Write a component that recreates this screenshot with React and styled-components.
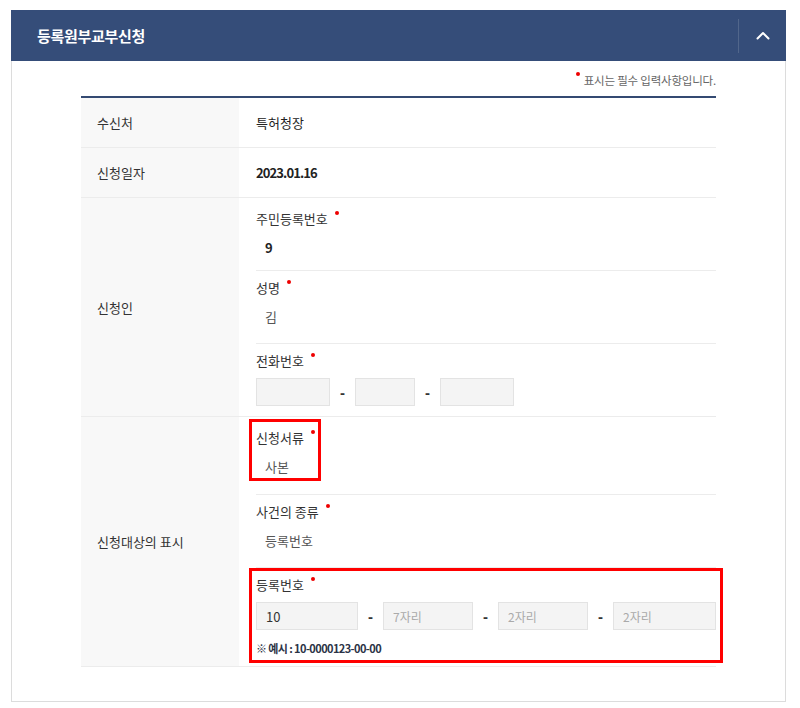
import styled, { createGlobalStyle } from "styled-components";

/* ------------------ GLOBAL ------------------ */

const GlobalStyle = createGlobalStyle`
  html, body {
    margin: 0;
    padding: 0;
    background: #fff;
  }
  body {
    padding: 10px 0 0 11px;
    font-family: "Noto Sans CJK KR", "Noto Sans", sans-serif;
    color: #333;
  }
`;

/* ------------------ STYLES ------------------ */

const Panel = styled.section`
  width: 775px;
  box-sizing: border-box;
  border: 1px solid #dcdcdc;
  border-top: none;
  background: #fff;
`;

const Header = styled.header`
  display: flex;
  align-items: center;
  justify-content: space-between;
  height: 51px;
  margin: 0 -1px;
  background: #354d79;
`;

const Title = styled.h2`
  margin: 0;
  padding-left: 26px;
  font-size: 15px;
  font-weight: 700;
  letter-spacing: -0.3px;
  color: #fff;
`;

const ToggleButton = styled.button`
  display: flex;
  align-items: center;
  justify-content: center;
  width: 48px;
  height: 34px;
  padding: 0;
  border: none;
  border-left: 1px solid rgba(255, 255, 255, 0.14);
  background: transparent;
  cursor: pointer;
`;

const Body = styled.div`
  padding: 0 69px 34px;
`;

const Notice = styled.p`
  margin: 0 0 7px;
  padding-top: 10px;
  line-height: 18px;
  text-align: right;
  font-size: 11.5px;
  letter-spacing: -0.2px;
  color: #666;
`;

const Dot = styled.span`
  display: inline-block;
  width: 4px;
  height: 4px;
  margin: ${({ $gap }) => `1px 0 0 ${$gap}px`};
  border-radius: 50%;
  background: #ee0000;
  vertical-align: top;
`;

const Table = styled.div`
  border-top: 2px solid #344a72;
`;

const Row = styled.div`
  display: grid;
  grid-template-columns: 158px 1fr;
  min-height: ${({ $height }) => $height || 0}px;
  border-bottom: 1px solid #ececec;
`;

const HeadCell = styled.div`
  display: flex;
  align-items: center;
  padding-left: 16px;
  background: #f8f8f8;
  font-size: 13px;
  color: #333;
`;

const DataCell = styled.div`
  display: flex;
  align-items: ${({ $stack }) => ($stack ? "stretch" : "center")};
  flex-direction: ${({ $stack }) => ($stack ? "column" : "row")};
  padding-left: 17px;
  font-size: 13px;
  font-weight: ${({ $bold }) => ($bold ? 600 : 400)};
  letter-spacing: ${({ $bold }) => ($bold ? "-0.9px" : "0")};
  color: #222;
`;

const Field = styled.div`
  position: relative;
  padding: ${({ $pad }) => $pad};
  border-bottom: ${({ $last }) => ($last ? "none" : "1px solid #ececec")};
`;

const Marked = styled.div`
  position: relative;
  display: ${({ $inline }) => ($inline ? "inline-block" : "block")};

  &::after {
    content: "";
    position: absolute;
    top: ${({ $inset }) => $inset[0]}px;
    right: ${({ $inset }) => $inset[1]}px;
    bottom: ${({ $inset }) => $inset[2]}px;
    left: ${({ $inset }) => $inset[3]}px;
    border: 3px solid #ff0000;
    pointer-events: none;
  }
`;

const FieldLabel = styled.div`
  line-height: 18px;
  font-size: 13px;
  color: #333;
`;

const FieldValue = styled.div`
  margin-top: 10px;
  padding-left: 9px;
  line-height: 20px;
  font-size: 13px;
  font-weight: ${({ $bold }) => ($bold ? 600 : 400)};
  color: ${({ $bold }) => ($bold ? "#222" : "#555")};
`;

const InputRow = styled.div`
  display: flex;
  align-items: center;
  margin-top: 8px;
`;

const TextBox = styled.input`
  box-sizing: border-box;
  width: ${({ $width }) => $width}px;
  height: 28px;
  padding: 0 9px;
  border: 1px solid #e3e3e3;
  background: #f4f4f4;
  font-family: "Noto Sans CJK KR", "Noto Sans", sans-serif;
  font-size: 13px;
  color: #333;
  outline: none;

  &::placeholder {
    font-size: 12px;
    color: #aaa;
  }
`;

const Dash = styled.span`
  width: 25px;
  text-align: center;
  font-family: "Liberation Sans", sans-serif;
  font-size: 15px;
  font-weight: 700;
  color: #333;
`;

const Example = styled.p`
  margin: 8px 0 0;
  line-height: 20px;
  font-size: 11px;
  font-weight: 700;
  letter-spacing: -0.6px;
  color: #2b3346;
`;

/* ------------------ PARTS ------------------ */

function ChevronUp() {
  return (
    <svg width="14" height="9" viewBox="0 0 14 9" fill="none">
      <path d="M1.5 7.5 7 2l5.5 5.5" stroke="#fff" strokeWidth="2" strokeLinecap="round" strokeLinejoin="round" />
    </svg>
  );
}

function Required({ children }) {
  return (
    <FieldLabel>
      {children}
      <Dot $gap={7} />
    </FieldLabel>
  );
}

function SplitInputs({ parts }) {
  return (
    <InputRow>
      {parts.map((part, i) => (
        <span key={i} style={{ display: "contents" }}>
          {i > 0 && <Dash>-</Dash>}
          <TextBox
            $width={part.width}
            defaultValue={part.value}
            placeholder={part.placeholder}
            readOnly
          />
        </span>
      ))}
    </InputRow>
  );
}

/* ------------------ COMPONENT ------------------ */

export default function App() {
  return (
    <>
      <GlobalStyle />
      <Panel>
        <Header>
          <Title>등록원부교부신청</Title>
          <ToggleButton aria-label="접기">
            <ChevronUp />
          </ToggleButton>
        </Header>

        <Body>
          <Notice>
            <Dot $gap={0} style={{ marginRight: 4 }} />
            표시는 필수 입력사항입니다.
          </Notice>

          <Table>
            <Row $height={49}>
              <HeadCell>수신처</HeadCell>
              <DataCell>특허청장</DataCell>
            </Row>

            <Row $height={49}>
              <HeadCell>신청일자</HeadCell>
              <DataCell $bold>2023.01.16</DataCell>
            </Row>

            <Row>
              <HeadCell>신청인</HeadCell>
              <DataCell $stack>
                <Field $pad="12px 0 12px">
                  <Required>주민등록번호</Required>
                  <FieldValue $bold>9</FieldValue>
                </Field>
                <Field $pad="8px 0 16px">
                  <Required>성명</Required>
                  <FieldValue>김</FieldValue>
                </Field>
                <Field $pad="8px 0 10px" $last>
                  <Required>전화번호</Required>
                  <SplitInputs parts={[{ width: 74 }, { width: 60 }, { width: 74 }]} />
                </Field>
              </DataCell>
            </Row>

            <Row>
              <HeadCell>신청대상의 표시</HeadCell>
              <DataCell $stack>
                <Field $pad="12px 0 17px">
                  <Marked $inline $inset={[-10, -6, -4, -7]}>
                    <Required>신청서류</Required>
                    <FieldValue>사본</FieldValue>
                  </Marked>
                </Field>
                <Field $pad="8px 0 16px">
                  <Required>사건의 종류</Required>
                  <FieldValue>등록번호</FieldValue>
                </Field>
                <Marked $inset={[0, -7, 3, -7]}>
                  <Field $pad="8px 0 8px" $last>
                    <Required>등록번호</Required>
                    <SplitInputs
                      parts={[
                        { width: 102, value: "10" },
                        { width: 90, placeholder: "7자리" },
                        { width: 90, placeholder: "2자리" },
                        { width: 103, placeholder: "2자리" },
                      ]}
                    />
                    <Example>※ 예시 : 10-0000123-00-00</Example>
                  </Field>
                </Marked>
              </DataCell>
            </Row>
          </Table>
        </Body>
      </Panel>
    </>
  );
}
